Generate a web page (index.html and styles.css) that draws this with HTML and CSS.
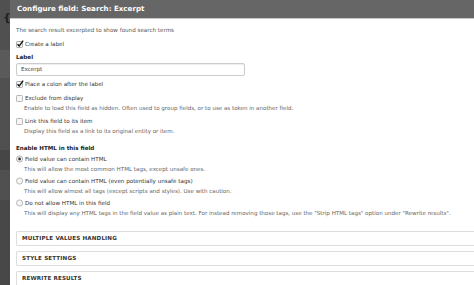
FILE: index.html
```html
<!DOCTYPE html>
<html>
<head>
<meta charset="utf-8">
<link rel="stylesheet" href="styles.css">
</head>
<body>
<div class="page">
  <div class="backdrop">
    <div class="bd-brace">{</div>
    <div class="bd-band b1"></div>
    <div class="bd-band b2"></div>
    <div class="bd-band b3"></div>
  </div>
  <div class="dialog">
    <div class="titlebar">Configure field: Search: Excerpt</div>
    <div class="content">
      <div class="intro">The search result excerpted to show found search terms</div>
      <div class="check first"><svg class="box" viewBox="0 0 8 8" width="8" height="8"><rect x="0.5" y="1.5" width="6" height="6" rx="0.8" fill="#f2f2f2" stroke="#9a9a9a" stroke-width="0.8"/><path d="M1.5 4.2 L3.2 6 L7.2 0.6" fill="none" stroke="#111" stroke-width="1.3"/></svg><span>Create a label</span></div>
      <div class="field">
        <div class="flabel">Label</div>
        <div class="input">Excerpt</div>
      </div>
      <div class="check colon"><svg class="box" viewBox="0 0 8 8" width="8" height="8"><rect x="0.5" y="1.5" width="6" height="6" rx="0.8" fill="#f2f2f2" stroke="#9a9a9a" stroke-width="0.8"/><path d="M1.5 4.2 L3.2 6 L7.2 0.6" fill="none" stroke="#111" stroke-width="1.3"/></svg><span>Place a colon after the label</span></div>
      <div class="opt">
        <div class="check"><svg class="box" viewBox="0 0 8 8" width="8" height="8"><rect x="0.5" y="1.5" width="6" height="6" rx="0.8" fill="#f6f6f6" stroke="#a5a5a5" stroke-width="0.8"/></svg><span>Exclude from display</span></div>
        <div class="desc">Enable to load this field as hidden. Often used to group fields, or to use as token in another field.</div>
      </div>
      <div class="opt">
        <div class="check"><svg class="box" viewBox="0 0 8 8" width="8" height="8"><rect x="0.5" y="1.5" width="6" height="6" rx="0.8" fill="#f6f6f6" stroke="#a5a5a5" stroke-width="0.8"/></svg><span>Link this field to its item</span></div>
        <div class="desc">Display this field as a link to its original entity or item.</div>
      </div>
      <div class="group">
        <div class="flabel">Enable HTML in this field</div>
        <div class="opt">
          <div class="check"><svg class="box" viewBox="0 0 8 8" width="8" height="8"><circle cx="3.6" cy="4" r="3.1" fill="#f4f4f4" stroke="#a0a0a0" stroke-width="0.8"/><circle cx="3.6" cy="4" r="1.4" fill="#333"/></svg><span>Field value can contain HTML</span></div>
          <div class="desc">This will allow the most common HTML tags, except unsafe ones.</div>
        </div>
        <div class="opt">
          <div class="check"><svg class="box" viewBox="0 0 8 8" width="8" height="8"><circle cx="3.6" cy="4" r="3.1" fill="#f6f6f6" stroke="#a8a8a8" stroke-width="0.8"/></svg><span>Field value can contain HTML (even potentially unsafe tags)</span></div>
          <div class="desc">This will allow almost all tags (except scripts and styles). Use with caution.</div>
        </div>
        <div class="opt">
          <div class="check"><svg class="box" viewBox="0 0 8 8" width="8" height="8"><circle cx="3.6" cy="4" r="3.1" fill="#f6f6f6" stroke="#a8a8a8" stroke-width="0.8"/></svg><span>Do not allow HTML in this field</span></div>
          <div class="desc">This will display any HTML tags in the field value as plain text. For instead removing those tags, use the "Strip HTML tags" option under "Rewrite results".</div>
        </div>
      </div>
      <div class="details">
        <div class="summary">MULTIPLE VALUES HANDLING</div>
        <div class="summary">STYLE SETTINGS</div>
        <div class="summary">REWRITE RESULTS</div>
      </div>
    </div>
  </div>
</div>
</body>
</html>
```
FILE: styles.css
```css
html, body {
  margin: 0;
  padding: 0;
  width: 474px;
  height: 285px;
  overflow: hidden;
  background: #4b4b4b;
  font-family: "DejaVu Sans", Verdana, sans-serif;
}
.page {
  display: flex;
  width: 474px;
  height: 285px;
}
.backdrop {
  position: relative;
  width: 10px;
  flex: none;
  background: #505050;
}
.bd-brace {
  position: absolute;
  left: 3px;
  top: 11px;
  color: #1f1f1f;
  font-weight: bold;
  font-size: 11px;
}
.bd-band {
  position: absolute;
  left: 0;
  width: 10px;
  background: #5a5a5a;
}
.b1 { top: 50px; height: 28px; }
.b2 { top: 150px; height: 20px; background: #464646; }
.b3 { top: 200px; height: 85px; background: #484848; }
.dialog {
  flex: 1;
  background: #fff;
  display: flex;
  flex-direction: column;
  min-width: 0;
}
.titlebar {
  height: 19px;
  flex: none;
  box-sizing: border-box;
  background: #666;
  border-bottom: 1px solid #c8c8c8;
  color: #fff;
  font-weight: bold;
  font-size: 7.1px;
  line-height: 17px;
  padding-left: 7px;
  white-space: nowrap;
}
.content {
  padding: 6px 0 0 6px;
  font-size: 5.6px;
  color: #333;
}
.intro {
  color: #555;
  height: 11px;
  line-height: 11px;
}
.check {
  display: flex;
  align-items: center;
  height: 10px;
  gap: 1px;
  white-space: nowrap;
}
.check.first { margin-top: 2px; height: 11px; }
.check.colon { margin-top: 2.5px; height: 11px; }
.box {
  flex: none;
  display: block;
}
.field {
  margin-top: 4px;
}
.flabel {
  font-weight: bold;
  color: #222;
  line-height: 9px;
  height: 9px;
}
.input {
  margin-top: 0.5px;
  width: 229px;
  height: 13px;
  box-sizing: border-box;
  border: 1px solid #ccc;
  border-radius: 2px;
  padding-left: 4px;
  line-height: 11px;
  color: #444;
  box-shadow: inset 0 1px 1px #eee;
}
.opt {
  margin-top: 2px;
}
.colon + .opt { margin-top: 4px; }
.desc {
  color: #666;
  padding-left: 8px;
  font-size: 5.56px;
  line-height: 11px;
  height: 11px;
  white-space: nowrap;
}
.group {
  margin-top: 6.5px;
}
.group .opt { margin-top: 1px; }
.group .flabel + .opt { margin-top: 1.5px; }
.details {
  margin-top: 12px;
  display: flex;
  flex-direction: column;
  gap: 5px;
}
.summary {
  height: 15px;
  flex: none;
  box-sizing: border-box;
  border: 1px solid #ddd;
  border-right: none;
  border-radius: 2px 0 0 2px;
  padding-left: 5px;
  font-weight: bold;
  line-height: 13px;
  color: #333;
  letter-spacing: 0.15px;
}
```
